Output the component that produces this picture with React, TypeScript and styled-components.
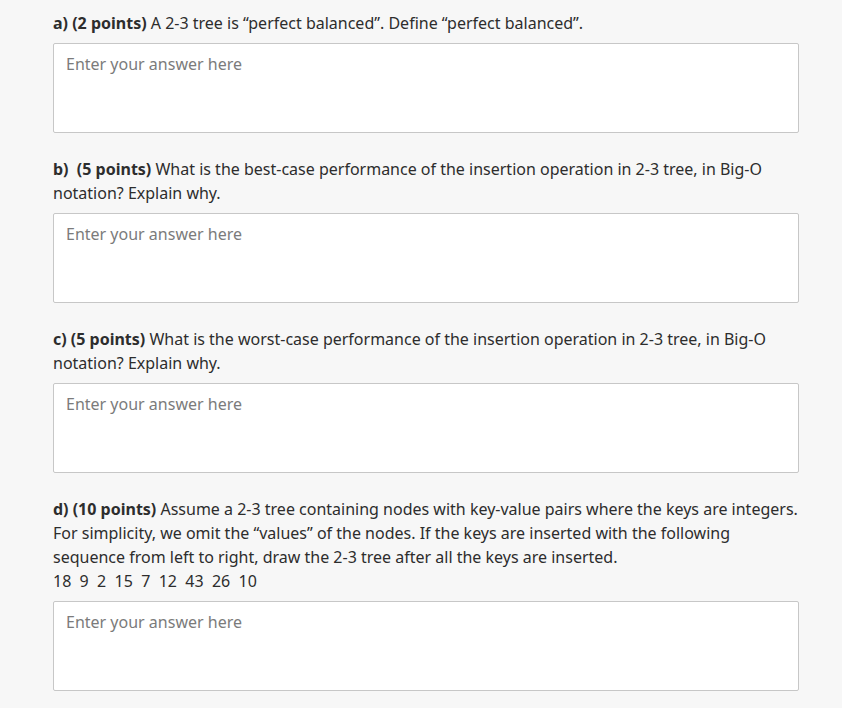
import React from 'react';
import styled, { createGlobalStyle } from 'styled-components';

const GlobalStyle = createGlobalStyle`
    html, body {
        margin: 0;
        padding: 0;
        background: #f7f7f7;
    }
    body {
        font-family: "Noto Sans", "Open Sans", sans-serif;
        color: #2d2d2d;
    }
`

const Page = styled.div`
    width: 746px;
    padding: 11px 0 16px 53px;
    display: flex;
    flex-direction: column;
    gap: 24px;
`

const Question = styled.section`
    display: flex;
    flex-direction: column;
    gap: 8px;
`

const Prompt = styled.div`
    font-size: 16px;
    line-height: 24px;
`

const Label = styled.strong`
    font-weight: 700;
    white-space: pre;
`

const Keys = styled.div`
    white-space: pre;
`

const Answer = styled.textarea`
    box-sizing: border-box;
    width: 100%;
    height: 90px;
    margin: 0;
    padding: 8px 12px;
    border: 1px solid #c7c7c7;
    border-radius: 2px;
    background: #fff;
    font-family: "Noto Sans", "Open Sans", sans-serif;
    font-size: 16px;
    line-height: 24px;
    color: #2d2d2d;
    resize: none;
    &::placeholder {
        color: #7b7b7b;
    }
    &:focus {
        outline: none;
    }
`

type QuestionProps = {
    label: string
    children: React.ReactNode
}

function QuestionBlock(prop: QuestionProps) {
    return (
        <Question>
            <Prompt>
                <Label>{prop.label}</Label> {prop.children}
            </Prompt>
            <Answer placeholder="Enter your answer here" />
        </Question>
    );
}

export default function App() {
    return (
        <>
            <GlobalStyle />
            <Page>
                <QuestionBlock label="a) (2 points)">
                    A 2-3 tree is “perfect balanced”. Define “perfect balanced”.
                </QuestionBlock>
                <QuestionBlock label="b)  (5 points)">
                    What is the best-case performance of the insertion operation in 2-3 tree, in Big-O notation? Explain why.
                </QuestionBlock>
                <QuestionBlock label="c) (5 points)">
                    What is the worst-case performance of the insertion operation in 2-3 tree, in Big-O notation? Explain why.
                </QuestionBlock>
                <QuestionBlock label="d) (10 points)">
                    Assume a 2-3 tree containing nodes with key-value pairs where the keys are integers. For simplicity, we omit the “values” of the nodes. If the keys are inserted with the following sequence from left to right, draw the 2-3 tree after all the keys are inserted.
                    <Keys>{"18  9  2  15  7  12  43  26  10"}</Keys>
                </QuestionBlock>
            </Page>
        </>
    );
}
